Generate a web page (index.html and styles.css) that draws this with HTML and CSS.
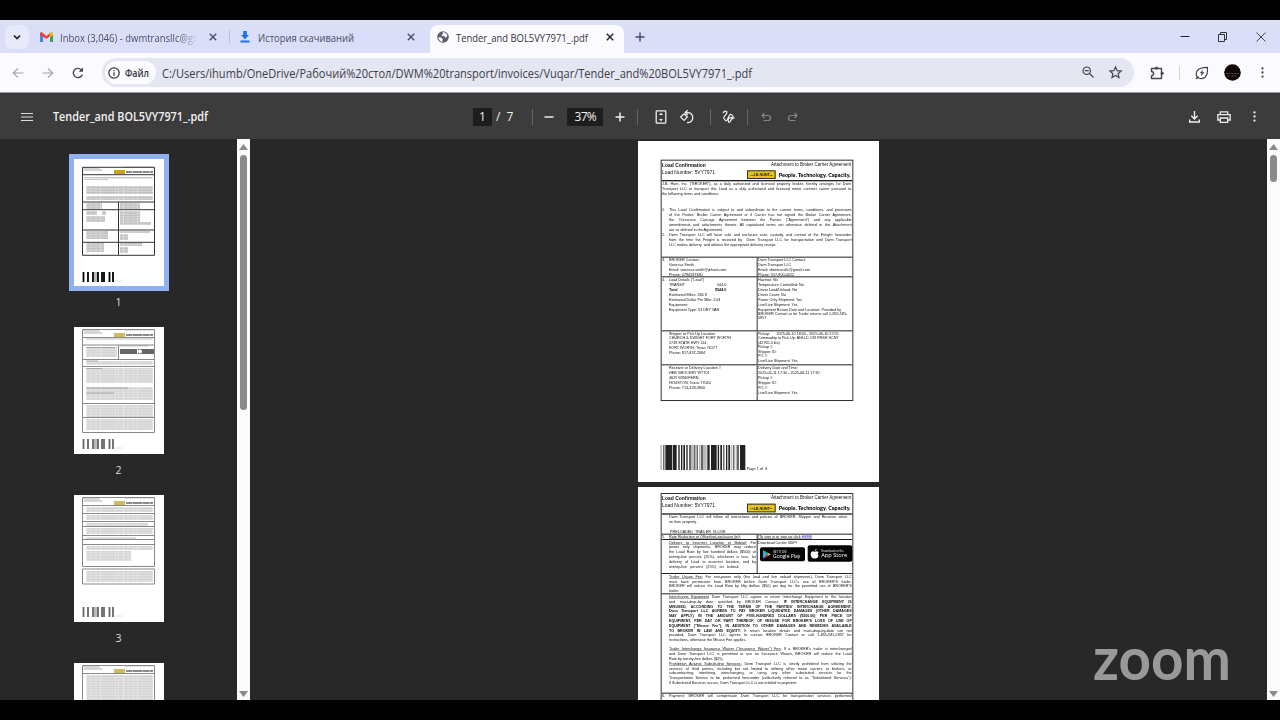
FILE: index.html
```html
<!DOCTYPE html>
<html lang="ru">
<head>
<meta charset="utf-8">
<title>Tender_and BOL5VY7971_.pdf</title>
<link rel="stylesheet" href="styles.css">
</head>
<body>
<svg class="defs" width="0" height="0">
  <defs>
    <pattern id="words" width="37" height="3.3" patternUnits="userSpaceOnUse"><path d="M0 .8h7m.4 0h5m.4 0h9m.4 0h4m.3 0h10.500M0 2.450h4m.4 0h8m.4 0h4m.4 0h9m.3 0h10.500" stroke="#aaa" stroke-width="1"/></pattern>
    <pattern id="pale" width="37" height="3.3" patternUnits="userSpaceOnUse"><path d="M0 .8h7m.4 0h5m.4 0h9m.4 0h4m.3 0h10.500M0 2.450h4m.4 0h8m.4 0h4m.4 0h9m.3 0h10.500" stroke="#c4c4c4" stroke-width="1"/></pattern>
    <g id="thumbhead">
      <path d="M9.500 4h16M9.500 6h19" stroke="#999" stroke-width=".8"/><path d="M50 3h29" stroke="#bbb" stroke-width=".8"/>
      <path d="M52 8h27" stroke="#666" stroke-width="1.300" stroke-dasharray="6 .5 10 .5"/>
    </g>
    <g id="thumbbars"><path d="M1 0v10M5.500 0v10M10.500 0v10M15.500 0v10M19.500 0v10M21.500 0v10M27 0v10M30.500 0v10" stroke-width="1.800"/><path d="M13 0v10" stroke="#bbb" stroke-width="3"/><path d="M32 9h8" stroke="#ccc" stroke-width=".6"/></g>
    <symbol id="close" viewBox="0 0 10 10"><path d="M1.800 1.800l6.400 6.400M8.200 1.800l-6.400 6.400" fill="none" stroke="currentColor" stroke-width="1.400"/></symbol>
    <symbol id="dots" viewBox="0 0 16 16"><g fill="currentColor"><circle cx="8" cy="3" r="1.400"/><circle cx="8" cy="8" r="1.400"/><circle cx="8" cy="13" r="1.400"/></g></symbol>
  </defs>
</svg>
<div class="screen">
  <header class="tabs">
    <div class="tabsearch"><svg width="10" height="10" viewBox="0 0 10 10"><path d="M2 3.500l3 3 3-3" fill="none" stroke="#222" stroke-width="1.700"/></svg></div>
    <div class="tab tab-mail">
      <svg width="13" height="10" viewBox="0 0 13 10"><path d="M0 1.500V10h3V4z" fill="#4285f4"/><path d="M10 4v6h3V1.500z" fill="#34a853"/><path d="M0 1.500Q0 0 1.500 0L6.500 4 11.500 0 10 4 6.500 7 0 3z" fill="#ea4335"/><path d="M10 1.200L11.500 0Q13 0 13 1.500V3l-3 2z" fill="#fbbc04"/></svg>
      <svg class="label fade" width="139" height="20"><text x="1" y="14.500" textLength="137" lengthAdjust="spacingAndGlyphs">Inbox (3,046) - dwmtransllc@gr</text></svg>
      <svg class="x" width="10" height="10"><use href="#close"/></svg>
    </div>
    <div class="tab tab-downloads">
      <svg width="10" height="12" viewBox="0 0 10 12"><path d="M3.200 0h3.600v4H9L5 8.200 1 4h2.200zM.5 9.500h9V11.500h-9z" fill="#1a73e8"/></svg>
      <svg class="label" width="98" height="20"><text x="0" y="14.500" textLength="96" lengthAdjust="spacingAndGlyphs">История скачиваний</text></svg>
      <svg class="x" width="10" height="10"><use href="#close"/></svg>
    </div>
    <div class="tab tab-active">
      <svg width="12" height="12" viewBox="0 0 12 12"><circle cx="6" cy="6" r="5.800" fill="#5b5d6b"/><path d="M1.200 6.200l3 .3 1.600 1.700-.7 2.700Q2 10 1.200 6.200zM5.500 1.300q3.600-.7 5 3.400L8.700 7 7.200 5 5 5.200 4.600 3.800 6 3z" fill="#fafaff"/></svg>
      <svg class="label" width="134" height="20"><text x="0" y="14.500" textLength="132" lengthAdjust="spacingAndGlyphs">Tender_and BOL5VY7971_.pdf</text></svg>
      <svg class="x" width="10" height="10"><use href="#close"/></svg>
    </div>
    <svg class="plus" width="10" height="10"><path d="M5 .5v9M.5 5h9" stroke="#444a5c" stroke-width="1.400"/></svg>
    <div class="winbtns">
      <svg width="38" height="12"><path d="M14.500 5.500h9" stroke="#222"/></svg>
      <svg width="38" height="12"><path d="M14.500 3.500h6v7h-6zM16.500 3.500v-2h6v7h-2" fill="none" stroke="#333"/></svg>
      <svg width="38" height="12"><path d="M14.500 1.500l9 9M23.500 1.500l-9 9" stroke="#333" stroke-width=".9"/></svg>
    </div>
  </header>

  <div class="nav">
    <div class="cell"><svg width="12" height="12"><path d="M11.500 6H1.500M6 1.300L1.300 6 6 10.700" fill="none" stroke="#a2a4ae" stroke-width="1.200"/></svg></div>
    <div class="cell"><svg width="12" height="12"><path d="M.5 6h10M6 1.300L10.700 6 6 10.700" fill="none" stroke="#a2a4ae" stroke-width="1.200"/></svg></div>
    <div class="cell"><svg width="12" height="12"><path d="M10.300 7.500A4.600 4.600 0 1 1 9.300 2.800L10.500 4" fill="none" stroke="#44474f" stroke-width="1.400"/><path d="M11 .5v4.300H6.700z" fill="#44474f"/></svg></div>
    <div class="omnibox">
      <div class="chip"><svg width="12" height="12"><circle cx="6" cy="6" r="5.200" fill="none" stroke="#333" stroke-width="1.200"/><path d="M6 5.200v3.600M6 3v1.200" stroke="#333" stroke-width="1.200"/></svg><svg width="25" height="20"><text x="0" y="14" textLength="24" lengthAdjust="spacingAndGlyphs">Файл</text></svg></div>
      <svg class="url" width="592" height="22"><text x="0" y="15.500" textLength="590" lengthAdjust="spacingAndGlyphs">C:/Users/ihumb/OneDrive/Рабочий%20стол/DWM%20transport/invoices/Vuqar/Tender_and%20BOL5VY7971_.pdf</text></svg>
      <div class="omni-actions">
        <svg width="12" height="12" fill="none" stroke="#44474f" stroke-width="1.200"><circle cx="4.700" cy="4.700" r="3.700"/><path d="M7.500 7.500l4 4M2.800 4.700h3.800"/></svg>
        <svg width="13" height="13" viewBox="0 0 13 13"><path d="M6.500 1l1.600 3.700 4 .35-3 2.650.9 3.900-3.500-2.100L3 11.600l.9-3.900-3-2.650 4-.35z" fill="none" stroke="#44474f" stroke-width="1.200"/></svg>
      </div>
    </div>
    <div class="cell ext"><svg width="14" height="14" viewBox="0 0 14 14"><path d="M1.500 2.500h10v10h-10V9.700a2.100 2.100 0 0 0 0-4.200z" fill="none" stroke="#44474f" stroke-width="1.400" stroke-linejoin="round"/><circle cx="6.500" cy="1.900" r="1.500" fill="#44474f"/><circle cx="12.200" cy="7.300" r="1.500" fill="#44474f"/></svg></div>
    <i class="navsep"></i>
    <div class="cell"><svg width="14" height="14" viewBox="0 0 14 14" fill="none" stroke="#44474f" stroke-width="1.200"><path d="M2.200 11.500Q.3 7.500 2.300 4.600 4.500 1.300 12.400 1.300 13 8.800 10 11.200 6.500 13.800 2.200 11.500zM1 13l2.500-2.500"/><path d="M8.200 3.500L4.700 7.300h2L6 10.300l3.600-4H7.300z" fill="#44474f" stroke="none"/></svg></div>
    <div class="cell"><svg width="17" height="17"><circle cx="8.500" cy="8.500" r="8.300" fill="#100808"/><path d="M2 9.500h13M3 12h3m2 0h5" stroke="#52423d" stroke-width="1" stroke-dasharray="2 .7"/></svg></div>
    <div class="cell c44"><svg width="13" height="13"><use href="#dots"/></svg></div>
  </div>

  <div class="pdfbar">
    <svg class="menu" width="12" height="10"><path d="M0 1.500h12M0 5h12M0 8.500h12" stroke="#ddd" stroke-width="1.200"/></svg>
    <svg class="doc-title" width="157" height="22"><text x="0" y="15" textLength="155" lengthAdjust="spacingAndGlyphs">Tender_and BOL5VY7971_.pdf</text></svg>
    <div class="controls">
      <span class="field pageno">1</span><span class="slash">/</span><span class="total">7</span>
      <i class="sep"></i>
      <svg width="10" height="10"><path d="M.5 5h9" stroke="#eee" stroke-width="1.500"/></svg>
      <span class="field zoomval">37%</span>
      <svg width="10" height="10"><path d="M.5 5h9M5 .5v9" stroke="#eee" stroke-width="1.500"/></svg>
      <i class="sep s2"></i>
      <svg class="fit" width="12" height="14"><rect x="1.200" y=".8" width="9.600" height="12.400" rx=".8" fill="none" stroke="#eee" stroke-width="1.300"/><path d="M6 2.800l2 2.200H4zM6 11.200l2-2.200H4z" fill="#eee"/></svg>
      <svg class="rotate" width="15" height="14" fill="none" stroke="#eee" stroke-width="1.300"><path d="M5 3.800L8.300 7.100 5 10.400 1.700 7.100z"/><path d="M8 12.500a5 5 0 1 0 .2-9.900H6.500M8.700.3L6.300 2.600 8.700 5"/></svg>
      <i class="sep s3"></i>
      <svg class="draw" width="13" height="13" fill="none" stroke="#eee" stroke-width="1.200"><path d="M1 3Q2.500.5 4.200 1.200T3.800 4.600 1.600 7.600 3 10 6.200 7.600 9.800 4.900 10.600 8 8 11.600 6.200 10.200 12.500 8.200"/></svg>
      <i class="sep s4"></i>
      <svg class="undo" width="11" height="10" fill="none" stroke="#858585" stroke-width="1.200"><path d="M3.500 1L1 3.500 3.500 6M1 3.500h6a2.500 2.500 0 0 1 0 5H2.500"/></svg>
      <svg class="redo" width="11" height="10" fill="none" stroke="#858585" stroke-width="1.200"><path d="M7.500 1L10 3.500 7.500 6M10 3.500H4a2.500 2.500 0 0 0 0 5h4.500"/></svg>
    </div>
    <div class="pdfactions">
      <div class="cell"><svg width="11" height="12" fill="none" stroke="#eee" stroke-width="1.400"><path d="M5.500 0v7.500M2.300 4.700l3.200 3.200 3.200-3.200M.7 8.500v2.500h9.600V8.500"/></svg></div>
      <div class="cell"><svg width="14" height="12" fill="none" stroke="#eee" stroke-width="1.300"><path d="M3.300 3.500V.8h7.400v2.700M3.300 9H.8V3.700h12.400V9h-2.500M3.300 7h7.400v4.300H3.300z"/></svg></div>
      <div class="cell ce"><svg width="13" height="13"><use href="#dots"/></svg></div>
    </div>
  </div>

  <div class="viewer">
    <aside class="thumbs">
      <div class="thumb selected"><svg width="90" height="127" viewBox="0 0 90 127"><rect width="90" height="127" fill="#fff"/><use href="#thumbhead" y="5"/><rect x="40" y="11" width="11" height="4" fill="#c5a51c"/>
        <path d="M10 18h69v1.500H10zM10 20h24v1H10zM12 27h67v8H12zM12 37h67v4H12zM12 44h16v6H12zM46 44h20v6H46zM12 52h11v4H12zM28 52h4v4h-4zM12 57h19v6H12zM46 52h20v11H46zM46 63h31v3H46zM12 72h22v8H12zM46 72h30v2H46zM46 75h8v6H46zM12 84h18v9H12zM46 84h22v3H46zM46 88h8v6H46z" fill="url(#words)"/>
        <path d="M8.500 8.300h72v88h-72zM8.500 15.700h72M8.500 43h72M8.500 50.700h72M8.500 71h72M8.500 83.300h72M44.500 43v53" fill="none" stroke="#333" stroke-width="1"/><use href="#thumbbars" x="8.500" y="113" stroke="#000"/></svg></div>
      <b class="num n1">1</b>
      <div class="thumb t2"><svg width="90" height="127" viewBox="0 0 90 127"><rect width="90" height="127" fill="#fff"/><use href="#thumbhead"/><rect x="40" y="6" width="11" height="4" fill="#cbbd5e"/>
        <path d="M12 11h67v2H12zM12 20h31v10H12zM46 18h28v2H46zM12 34h67v4H12zM12 41h67v15H12zM12 60h67v13H12zM12 78h67v12H12zM12 92h67v11H12z" fill="url(#pale)"/>
        <path d="M46 22h17v5H46zM64 22h16v5H64z" fill="#666"/><circle cx="66" cy="24.500" r="2" fill="#fff"/><path d="M8.500 2.500h72v103h-72zM8.500 10.500h72M8.500 18h72M8.500 32.500h72M8.500 39.500h72M8.500 76.500h72M8.500 90.500h72M44.500 18v14.500" fill="none" stroke="#888"/><path d="M12 20.500h29M12 34h12M12 41.500h16M12 61h42M12 66h28" stroke="#999" stroke-width=".8"/><use href="#thumbbars" x="8.500" y="112" stroke="#666"/></svg></div>
      <b class="num">2</b>
      <div class="thumb t3"><svg width="90" height="127" viewBox="0 0 90 127"><rect width="90" height="127" fill="#fff"/><use href="#thumbhead"/><rect x="40" y="6" width="11" height="4" fill="#cbbd5e"/>
        <path d="M12 12h67v5H12zM12 20h67v5H12zM12 28h62v3H12zM12 33h67v6H12zM12 42h50v3H12zM12 51h67v4H12zM12 56h45v10H12zM12 76h67v11H12z" fill="url(#pale)"/>
        <path d="M8.500 2.500h72v69h-72zM8.500 10.500h72M8.500 18.500h72M8.500 26.500h72M8.500 31.500h72M8.500 40.500h72M8.500 44.500h72M8.500 49.500h72M8.500 74h72v15h-72z" fill="none" stroke="#888"/><use href="#thumbbars" x="8.500" y="112" stroke="#666"/></svg></div>
      <b class="num">3</b>
      <div class="thumb t4"><svg width="90" height="127" viewBox="0 0 90 127"><rect width="90" height="127" fill="#fff"/><use href="#thumbhead"/><rect x="40" y="6" width="11" height="4" fill="#cbbd5e"/>
        <path d="M12 12h67v26H12z" fill="url(#pale)"/><path d="M8.500 2.500h72v120h-72zM8.500 10.500h72" fill="none" stroke="#888"/></svg></div>
    </aside>
    <div class="scroll"><svg width="9" height="6"><path d="M4.500 0L9 6H0z" fill="#8a8a8a"/></svg><i class="bar long"></i><svg class="down" width="9" height="6"><path d="M0 0h9L4.500 6z" fill="#8a8a8a"/></svg></div>

    <main class="pages">
      <div class="page p1"><article class="sheet">
        <div class="frame">
          <section class="head">
            <div class="hl"><b>Load Confirmation</b><span>Load Number: 5VY7971</span></div>
            <div class="hr"><span>Attachment to Broker Carrier Agreement</span><div class="brand"><em><small>THE</small>J.B. HUNT<small>CO.</small></em><strong>People. Technology. Capacity.</strong></div></div>
          </section>
          <section class="intro">
            <div class="para"><p>J.B. Hunt, Inc. ("BROKER"), as a duly authorized and licensed property broker, hereby arranges for Dwm</p><p>Transport LLC to transport this Load as a duly authorized and licensed motor contract carrier pursuant to</p><p class="end">the following terms and conditions:</p></div>
            <div class="item first"><i>1.</i><p>This Load Confirmation is subject to and subordinate to the current terms, conditions, and provisions</p><p>of the Parties' Broker Carrier Agreement or if Carrier has not signed the Broker Carrier Agreement,</p><p>the Outsource Carriage Agreement between the Parties ("Agreement") and any applicable</p><p>amendments and attachments thereto. All capitalized terms not otherwise defined in this Attachment</p><p class="end">are as defined in the Agreement.</p></div>
            <div class="item"><i>2.</i><p>Dwm Transport LLC will have sole and exclusive care, custody, and control of the Freight hereunder</p><p>from the time the Freight is received by &nbsp;Dwm Transport LLC for transportation until Dwm Transport</p><p class="end">LLC makes delivery &nbsp;and obtains the appropriate delivery receipt.</p></div>
          </section>
          <section class="two r-contact">
            <div class="item"><i>3.</i><p>BROKER Contact:</p><p>Vanessa Smith</p><p>Email: vanessa.smith@jbhunt.com</p><p>Phone: 4794597380</p></div>
            <div><p>Dwm Transport LLC Contact:</p><p>Dwm Transport LLC</p><p>Email: dwmtransllc@gmail.com</p><p>Phone: 317-900-0022</p></div>
          </section>
          <section class="two r-load">
            <div class="item"><i>4.</i><p>Load Details ("Load")</p><p class="money"><span>TRANSIT</span><span>544.0</span></p><p class="money"><b>Total</b><b>$544.0</b></p><p>Estimated Miles: 266.9</p><p>Estimated Dollar Per Mile: 2.03</p><p>Equipment:</p><p>Equipment Type: 53 DRY VAN</p></div>
            <div><p>Hazmat: No</p><p>Temperature Controlled: No</p><p>Driver Load/Unload: No</p><p>Driver Count: No</p><p>Power Only Shipment: Yes</p><p>Live/Live Shipment: Yes</p><p>Equipment Return Date and Location: Provided by</p><p class="tight">BROKER Contact or for Trailer returns call 1-855-581-</p><p>5957</p></div>
          </section>
          <section class="two r-ship">
            <div class="item"><p>Shipper or Pick Up Location</p><p>CHURCH &amp; DWIGHT FORT WORTH</p><p>2749 STATE HWY 114,</p><p>FORT WORTH, Texas 76177</p><p>Phone: 817-837-2684</p></div>
            <div><p>Pickup: &nbsp; &nbsp; &nbsp;2025-06-10 18:00 - 2025-06-10 22:55</p><p>Commodity to Pick Up: AHLLD OXI FRSH SCNT</p><p>(42765.0 lbs)</p><p class="tight">Pickup #:</p><p>Shipper ID:</p><p>PO #:</p><p>Live/Live Shipment: Yes</p></div>
          </section>
          <section class="two r-recv">
            <div class="item"><p>Receiver or Delivery Location #</p><p>HEB GROCERY WTT01</p><p>4625 WINDFERN,</p><p>HOUSTON, Texas 77040</p><p>Phone: 713-329-3800</p></div>
            <div><p>Delivery Date and Time:</p><p>2025-06-11 17:30 - 2025-06-11 17:30</p><p>Pickup #:</p><p>Shipper ID:</p><p>PO #:</p><p>Live/Live Shipment: Yes</p></div>
          </section>
        </div>
        <footer><svg width="255" height="75" viewBox="0 0 255 75"><path d="M0 0h5v75H0zM91 0h10v75H91zM116 0h5v75h-5zM127 0h12v75h-12zM170 0h7v75h-7zM211 0h5v75h-5zM226 0h5v75h-5z" fill="#bbb"/><path d="M9 0h3v75H9zM15 0h21v75H15zM38 0h11v75H38zM54 0h4v75h-4zM62 0h4v75h-4zM69 0h5v75h-5zM78 0h4v75h-4zM87 0h4v75h-4zM102 0h3v75h-3zM109 0h3v75h-3zM123 0h4v75h-4zM141 0h7v75h-7zM152 0h17v75h-17zM173 0h3v75h-3zM180 0h5v75h-5zM189 0h3v75h-3zM197 0h4v75h-4zM204 0h5v75h-5zM219 0h3v75h-3zM231 0h4v75h-4zM239 0h16v75h-16z" fill="#222"/></svg><span>Page 1 of &nbsp;6</span></footer>
      </article></div>

      <div class="page p2"><article class="sheet">
        <div class="frame">
          <section class="head">
            <div class="hl"><b>Load Confirmation</b><span>Load Number: 5VY7971</span></div>
            <div class="hr"><span>Attachment to Broker Carrier Agreement</span><div class="brand"><em><small>THE</small>J.B. HUNT<small>CO.</small></em><strong>People. Technology. Capacity.</strong></div></div>
          </section>
          <section class="follow item"><p>Dwm Transport LLC will follow all instructions and policies of BROKER, Shipper and Receiver when</p><p class="end">on their property.</p><p class="end pre">PRELOADED &nbsp;TRAILER &nbsp;IS LIVE</p></section>
          <section class="two r-rate"><div class="item"><i>5.</i><p><u>Rate Reduction or Offset(not-exclusive list):</u></p></div><div><p><u>(To sign in or sign up click <a>HERE</a></u></p></div></section>
          <section class="two r-delivery">
            <div class="item just"><p><u>Delivery to Incorrect Location or Bobtail:</u> For</p><p>power only shipments, BROKER may reduce</p><p>the Load Rate by five hundred dollars ($500) or</p><p>twenty-five percent (25%), whichever is less, for</p><p>delivery of Load to incorrect location, and by</p><p class="brief">twenty-five percent (25%) for bobtail.</p></div>
            <div><p>Download Center 360™</p>
              <div class="badges">
                <div class="badge play"><svg width="26" height="28" viewBox="0 0 26 28"><path d="M2 1l12 13L2 27z" fill="#20bfe8"/><path d="M2 1l16 9-4 4z" fill="#32c46b"/><path d="M18 10l7 4-7 4-4-4z" fill="#ffc928"/><path d="M2 27l16-9-4-4z" fill="#ef4050"/></svg><div><small>GET IT ON</small><b>Google Play</b></div></div>
                <div class="badge apple"><svg width="28" height="34" viewBox="0 0 28 34"><path d="M20 2Q20 8 14 9 14 4 20 2zM14 11Q21 7 26 13 20 17 26 23 22 34 14 31 7 34 3 25-1 10 9 9.500z" fill="#fff"/></svg><div><small>Download on the</small><b>App Store</b></div></div>
              </div></div>
          </section>
          <section class="r-usage item just"><p><u>Trailer Usage Fee:</u> For non-power only (live load and live unload shipments), Dwm Transport LLC</p><p>must have permission from BROKER before Dwm Transport LLC's use of BROKER'S trailer.</p><p>BROKER will reduce the Load Rate by fifty dollars ($50) per day for the permitted use of BROKER'S</p><p class="end">trailer.</p></section>
          <section class="r-inter item just">
            <p><u>Interchange Equipment</u> Dwm Transport LLC agrees to return Interchange Equipment to the location</p><p>and must-drop-by date specified by BROKER Contact. <b>IF INTERCHANGE EQUIPMENT IS</b></p>
            <p><b>MISUSED, ACCORDING TO THE TERMS OF THE PARTIES' INTERCHANGE AGREEMENT,</b></p><p><b>Dwm Transport LLC AGREES TO PAY BROKER LIQUIDATED DAMAGES (OTHER DAMAGES</b></p><p><b>MAY APPLY) IN THE AMOUNT OF FIVE-HUNDRED DOLLARS ($500.00) PER PIECE OF</b></p><p><b>EQUIPMENT, PER DAY OR PART THEREOF, OF MISUSE FOR BROKER'S LOSS OF USE OF</b></p><p><b>EQUIPMENT ("Misuse Fee"), IN ADDITION TO OTHER DAMAGES AND REMEDIES AVAILABLE</b></p><p><b>TO BROKER IN LAW AND EQUITY.</b> If return location details and must-drop-by-date are not</p><p>provided, Dwm Transport LLC agrees to contact BROKER Contact or call 1-855-581-5957 for</p><p class="end">instructions, otherwise the Misuse Fee applies.</p>
            <p class="gap"><u>Trailer Interchange Insurance Waiver ("Insurance Waiver") Fee:</u> If a BROKER's trailer is interchanged</p><p>and Dwm Transport LLC is permitted to use an Insurance Waiver, BROKER will reduce the Load</p><p class="end">Rate by twenty-five dollars ($25).</p>
            <p><u>Prohibition Against Substituting Services:</u> Dwm Transport LLC is strictly prohibited from utilizing the</p><p>services of third parties, including but not limited to utilizing other motor carriers or brokers, or</p><p>subcontracting, interlining, interchanging, or using any other substituted services for the</p><p>Transportation Service to be performed hereunder (collectively referred to as "Substituted Services").</p><p class="end">If Substituted Services occurs, Dwm Transport LLC is not entitled to payment.</p>
          </section>
          <section class="r-pay item just"><i>6.</i><p>Payment: BROKER will compensate Dwm Transport LLC for transportation services performed</p></section>
        </div>
      </article></div>
    </main>
    <div class="scroll right"><svg width="9" height="6"><path d="M4.500 0L9 6H0z" fill="#8a8a8a"/></svg><i class="bar short"></i><svg class="down" width="9" height="6"><path d="M0 0h9L4.500 6z" fill="#8a8a8a"/></svg></div>
    <svg class="watermark" width="140" height="60"><text x="0" y="46" textLength="138" lengthAdjust="spacingAndGlyphs">zoom</text></svg>
  </div>
</div>
</body>
</html>
```
FILE: styles.css
```css
* { box-sizing: border-box; }
body { margin: 0; background: #000; font-family: "Open Sans", "Noto Sans", sans-serif; overflow: hidden; }
p { margin: 0; }
svg { display: block; flex: none; overflow: visible; }
.defs { position: absolute; }
.screen { width: 1280px; height: 720px; padding: 20px 0; display: flex; flex-direction: column; overflow: hidden; }

.tabs { height: 33px; flex: none; display: flex; align-items: center; background: linear-gradient(#dbe1f2, #dadefa 45%, #dadef8); padding: 0 0 0 5px; }
.tabsearch { width: 24px; height: 24px; border-radius: 8px; background: #e8eafb; display: grid; place-items: center; }
.tab { display: flex; align-items: center; height: 24px; color: #4a4d5c; }
.tab .label { margin-left: 6px; }
.tab text { font-size: 11.5px; fill: #4c4e5d; }
.tab .x { margin-left: auto; }
.tab-mail { width: 190px; padding: 0 11px 0 0; margin-left: 11px; border-right: 1px solid #b9bfe0; height: 14px; }
.fade { -webkit-mask-image: linear-gradient(90deg, #000 85%, transparent); mask-image: linear-gradient(90deg, #000 85%, transparent); }
.tab-downloads { width: 200px; padding: 0 14px 0 10px; }
.tab-downloads .label { margin-left: 8px; }
.tab-active { width: 194px; height: 28px; align-self: flex-end; background: #fafaff; border-radius: 8px 8px 0 0; padding: 0 9px 4px 7px; color: #222; }
.tab-active .label { margin-left: 7px; }
.tab-active text { fill: #34343f; }
.plus { margin-left: 11px; }
.winbtns { margin-left: auto; display: flex; }

.nav { height: 40px; flex: none; display: flex; align-items: center; background: #fafaff; padding: 0 3px; border-bottom: 1px solid #9999a2; }
.cell { width: 30px; flex: none; display: flex; justify-content: center; }
.c44 { color: #44474f; }
.ce { color: #eee; }
.omnibox { margin-left: 9px; width: 1032px; height: 29px; border-radius: 15px; background: #e4e6f2; display: flex; align-items: center; padding-left: 3px; }
.chip { width: 51px; height: 23px; border-radius: 12px; background: #fafaff; display: flex; align-items: center; gap: 5px; padding-left: 3px; }
.chip text { font-size: 11.500px; font-weight: 600; fill: #34343c; }
.url { margin-left: 6px; }
.url text { font-size: 12.500px; fill: #3c3d49; }
.omni-actions { margin-left: auto; display: flex; gap: 15px; padding-right: 12px; }
.ext { margin-left: 8px; }
.navsep { width: 1px; height: 14px; margin: 0 7px; background: #d0d1e2; }

.pdfbar { height: 46px; flex: none; display: flex; align-items: center; background: #3c3c3c; padding: 1px 11px 0 21px; color: #f1f1f1; }
.doc-title { margin-left: 20px; }
.doc-title text { font-size: 12px; font-weight: 600; fill: #f3f3f3; }
.controls { display: flex; align-items: center; margin-left: 263px; font-size: 12px; line-height: 18px; }
.field { background: #1d1d1d; height: 18px; text-align: center; }
.pageno { width: 19px; }
.slash { margin-left: 4px; }
.total { margin-left: 6px; }
.controls .sep { width: 1px; height: 16px; background: #666; margin: 0 11px 0 19px; }
.zoomval { width: 36px; margin: 0 12px 0 13px; letter-spacing: -.7px; }
.controls .s2 { margin: 0 17px 0 12px; }
.rotate { margin-left: 12px; }
.controls .s3 { margin: 0 11px 0 16px; }
.controls .s4 { margin: 0 13px 0 12px; }
.redo { margin-left: 15px; }
.pdfactions { margin-left: auto; display: flex; align-items: center; }

.viewer { height: 561px; flex: none; display: flex; position: relative; background: #282828; overflow: hidden; }
.thumbs { width: 237px; padding-top: 15px; display: flex; flex-direction: column; align-items: center; }
.thumb.selected { padding: 5px; background: #8fb1f0; }
.num { height: 36px; flex: none; line-height: 32px; font-size: 10.500px; color: #ddd; font-weight: 400; }
.num.n1 { line-height: 23px; }
.thumb { margin-left: 1px; flex: none; }
.thumb.t3, .thumb.t4 { margin-top: 5px; }
.scroll { width: 13px; flex: none; background: #fbfbfb; display: flex; flex-direction: column; align-items: center; padding: 5px 0 3px; }
.bar { width: 7px; margin-top: 5px; border-radius: 4px; background: #8a8a8a; }
.long { height: 255px; }
.short { height: 27px; }
.down { margin-top: auto; }
.right { margin-left: auto; }
.watermark { position: absolute; left: 1093px; top: 495px; }
.watermark text { font-family: Lato, sans-serif; font-weight: 700; font-size: 59px; fill: #999; }

.pages { margin-left: 388px; padding-top: 2px; width: 242px; }
.page { width: 241px; height: 341px; background: #fff; overflow: hidden; }
.p2 { margin-top: 5px; }
/* Document sheets are laid out at triple size and scaled down to the 37% view. */
.sheet { width: 723px; height: 1023px; transform: scale(.33333); transform-origin: 0 0; padding: 56px 78px 0 68px; font: 11.200px/14.500px "Liberation Sans", Arial, sans-serif; color: #101010; }
.p2 .sheet { padding-top: 18px; }
.frame { width: 578px; border: 3px solid #333; }
.frame section { border-bottom: 3px solid #222; white-space: nowrap; }
.frame section:last-child { border-bottom: 0; }
.frame .head { height: 62px; display: flex; justify-content: space-between; padding: 4px 3px 0 1px; border-bottom-width: 4px; }
.hl { display: flex; flex-direction: column; font-size: 14.800px; line-height: 18px; gap: 3px; }
.hr { font-size: 13.500px; line-height: 15px; text-align: right; }
.brand { display: flex; align-items: center; gap: 9px; margin-top: 10px; justify-content: flex-end; padding-right: 2px; }
.brand em { width: 86px; height: 26px; background: #e5c51c; border: 3px solid #333; font: italic 900 12px/19px Lato, sans-serif; display: flex; align-items: center; justify-content: center; color: #222; letter-spacing: -.5px; }
.brand small { font-size: 6px; }
.brand strong { font: 900 16.400px/20px Lato, sans-serif; color: #000; }
.intro { height: 229px; }
.intro p, .just p, .follow p { text-align: justify; text-align-last: justify; }
.frame p.end { text-align-last: left; }
.para { padding: 0 3px 0 1px; }
.item { padding: 0 2px 0 22px; position: relative; }
.item > i { position: absolute; left: 1px; top: 0; font-style: normal; }
.intro .item { line-height: 14.700px; }
.intro .first { margin: 35px 0 2px; }
.two { display: grid; grid-template-columns: 285px 287px; }
.two > div:last-child { border-left: 3px solid #333; padding-left: 1px; }
.r-contact { height: 59px; }
.r-load { height: 162px; line-height: 14.800px; }
.r-ship { height: 102px; line-height: 14.300px; }
.r-ship p:first-child { margin-top: -1px; }
.r-recv { height: 104px; line-height: 14.800px; }
.money { display: flex; justify-content: space-between; width: 172px; }
.two .tight { line-height: 11px; }
footer { display: flex; align-items: flex-end; gap: 4px; margin: 132px 0 0 -1px; font-size: 11.500px; }
footer span { line-height: 10px; }

.follow { height: 60px; }
.follow p:first-child { padding-right: 13px; }
.pre { margin: 14px 0 0 3px; }
.r-rate { height: 16px; line-height: 13px; }
.r-rate a { color: #1b1bd0; }
.r-delivery { height: 102px; line-height: 14.400px; }
.r-delivery .brief { width: 211px; }
.badges { display: flex; gap: 8px; padding: 2px 0 0 6px; align-items: flex-start; }
.badge { width: 135px; height: 42px; border-radius: 6px; background: #050505; color: #fff; display: flex; align-items: center; gap: 6px; padding-left: 7px; }
.badge small, .badge b { display: block; font-family: "Open Sans", sans-serif; }
.badge small { font-size: 8.500px; line-height: 9px; }
.badge b { font-size: 15px; font-weight: 500; line-height: 18px; }
.r-inter b { font-size: 10.900px; }
.play { margin-top: 6px; }
.apple { height: 49px; }
.badge.apple b { font-size: 17px; }
.r-usage { height: 61px; }
.r-inter { height: 298px; line-height: 14.400px; }
.gap { margin-top: 13px; }
.r-pay { height: 60px; }
```
